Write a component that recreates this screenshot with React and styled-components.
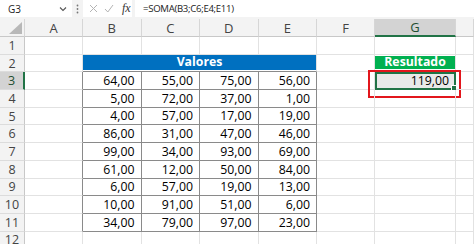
import React from "react";
import styled, { createGlobalStyle } from "styled-components";

const Global = createGlobalStyle`
  html, body { margin: 0; padding: 0; background: #fff; overflow: hidden; }
  body { font-family: "Open Sans", "Noto Sans", sans-serif; }
`;

const Page = styled.div`
  width: 474px;
  height: 244px;
  display: flex;
  flex-direction: column;
  background: #f3f3f3;
  overflow: hidden;
`;

const FormulaBar = styled.div`
  display: flex;
  align-items: stretch;
  padding-bottom: 2px;
  box-sizing: border-box;
  height: 19px;
  flex: none;
`;

const NameBox = styled.div`
  width: 72px;
  background: #fff;
  display: flex;
  align-items: center;
  justify-content: space-between;
  padding: 0 5px 0 8px;
  box-sizing: border-box;
  font-size: 10px;
  color: #222;
`;

const Dots = styled.div`
  width: 11px;
  display: flex;
  align-items: center;
  justify-content: center;
`;

const FxBox = styled.div`
  width: 49px;
  background: #fff;
  display: flex;
  align-items: center;
  gap: 6px;
  padding-left: 6px;
  box-sizing: border-box;
`;

const Fx = styled.span`
  font-family: "Liberation Serif", serif;
  font-style: italic;
  font-size: 12px;
  color: #333;
  margin-left: 2px;
`;

const FormulaInput = styled.div`
  flex: 1;
  margin-left: 3px;
  background: #fff;
  display: flex;
  align-items: center;
  padding-left: 8px;
  font-size: 9.6px;
  letter-spacing: -0.3px;
  color: #222;
`;

const Sheet = styled.div`
  flex: 1;
  display: grid;
  grid-template-columns: 25px 58px 58.5px 58.5px 58.5px 58.5px 58px 81px 1fr;
  grid-template-rows: 18px;
  grid-auto-rows: 17.7px;
  background: #fff;
`;

const Corner = styled.div`
  background: #f3f3f3;
  border-right: 1px solid #d6d6d6;
  border-bottom: 1px solid #c8c8c8;
  display: flex;
  align-items: flex-end;
  justify-content: flex-end;
  padding: 0 2px 2px 0;
`;

const ColHead = styled.div`
  background: ${(p) => (p.$sel ? "#d3d3d3" : "#f3f3f3")};
  border-right: 1px solid #d6d6d6;
  border-bottom: ${(p) => (p.$sel ? "2px solid #217346" : "1px solid #c8c8c8")};
  display: flex;
  align-items: center;
  justify-content: center;
  font-size: 13px;
  color: ${(p) => (p.$sel ? "#1f4e2f" : "#444")};
`;

const RowHead = styled.div`
  background: ${(p) => (p.$sel ? "#d3d3d3" : "#f3f3f3")};
  border-right: ${(p) => (p.$sel ? "2px solid #217346" : "1px solid #c8c8c8")};
  border-bottom: 1px solid #dcdcdc;
  display: flex;
  align-items: center;
  justify-content: center;
  font-size: 12.5px;
  color: ${(p) => (p.$sel ? "#1f4e2f" : "#444")};
  box-sizing: border-box;
`;

const Cell = styled.div`
  position: relative;
  box-sizing: border-box;
  border-right: 1px solid ${(p) => (p.$rd ? "#8a8a8a" : "#e2e2e2")};
  border-bottom: 1px solid ${(p) => (p.$bd ? "#8a8a8a" : "#e2e2e2")};
  display: flex;
  align-items: flex-end;
  justify-content: flex-end;
  padding: 0 6px 1px 0;
  font-size: 12.3px;
  color: #000;
  line-height: 15px;
`;

const Merged = styled.div`
  grid-column: ${(p) => p.$span};
  box-sizing: border-box;
  border-right: 1px solid ${(p) => (p.$rd ? "#8a8a8a" : "#e2e2e2")};
  border-bottom: 1px solid ${(p) => (p.$bd ? "#8a8a8a" : "#e2e2e2")};
  padding: ${(p) => p.$pad};
  display: flex;
  background: #fff;
`;

const Band = styled.div`
  flex: 1;
  background: ${(p) => p.$color};
  color: #fff;
  font-weight: 700;
  font-size: 12.3px;
  display: flex;
  align-items: center;
  justify-content: center;
  line-height: 1;
`;

const Selected = styled(Cell)`
  background: #e9e9e9;
  border: 2px solid #217346;
  padding: 0 5px 0 0;
`;

const Handle = styled.span`
  position: absolute;
  right: -3px;
  bottom: -3px;
  width: 4px;
  height: 4px;
  background: #217346;
  border: 1px solid #fff;
`;

const RedMark = styled.span`
  position: absolute;
  left: -9px;
  top: -4px;
  right: -7px;
  bottom: -10px;
  border: 2.5px solid #e2161c;
  pointer-events: none;
`;

const cols = ["A", "B", "C", "D", "E", "F", "G", "H"];
const data = [
  [64, 55, 75, 56],
  [5, 72, 37, 1],
  [4, 57, 17, 19],
  [86, 31, 47, 46],
  [99, 34, 93, 69],
  [61, 12, 50, 84],
  [6, 57, 19, 13],
  [10, 91, 51, 6],
  [34, 79, 97, 23],
];
const fmt = (n) => n.toFixed(2).replace(".", ",");

export default function App() {
  const rows = [];
  rows.push(
    <React.Fragment key="r1">
      <RowHead>1</RowHead>
      {cols.map((c) => (
        <Cell key={c} />
      ))}
    </React.Fragment>
  );
  rows.push(
    <React.Fragment key="r2">
      <RowHead>2</RowHead>
      <Cell />
      <Merged $span="span 4" $bd $pad="0 0 1px 0">
        <Band $color="#0070c0">Valores</Band>
      </Merged>
      <Cell />
      <Merged $span="span 1" $pad="1px 0 2px 0">
        <Band $color="#00b050">Resultado</Band>
      </Merged>
      <Cell />
    </React.Fragment>
  );
  data.forEach((r, i) => {
    const rn = i + 3;
    rows.push(
      <React.Fragment key={rn}>
        <RowHead $sel={rn === 3}>{rn}</RowHead>
        <Cell $rd />
        {r.map((v, j) => (
          <Cell key={j} $rd $bd>
            {fmt(v)}
          </Cell>
        ))}
        <Cell />
        {rn === 3 ? (
          <Selected>
            119,00
            <Handle />
            <RedMark />
          </Selected>
        ) : (
          <Cell />
        )}
        <Cell />
      </React.Fragment>
    );
  });
  rows.push(
    <React.Fragment key="r12">
      <RowHead>12</RowHead>
      {cols.map((c) => (
        <Cell key={c} />
      ))}
    </React.Fragment>
  );

  return (
    <>
      <Global />
      <Page>
        <FormulaBar>
          <NameBox>
            G3
            <svg width="8" height="6" viewBox="0 0 8 6">
              <path d="M1 1.5 L4 4.5 L7 1.5" fill="none" stroke="#555" strokeWidth="1.1" />
            </svg>
          </NameBox>
          <Dots>
            <svg width="3" height="10" viewBox="0 0 3 10">
              <circle cx="1.5" cy="1.5" r="0.9" fill="#777" />
              <circle cx="1.5" cy="5" r="0.9" fill="#777" />
              <circle cx="1.5" cy="8.5" r="0.9" fill="#777" />
            </svg>
          </Dots>
          <FxBox>
            <svg width="9" height="9" viewBox="0 0 9 9">
              <path d="M1 1 L8 8 M8 1 L1 8" stroke="#b4b4b4" strokeWidth="1" />
            </svg>
            <svg width="10" height="9" viewBox="0 0 10 9">
              <path d="M1 5 L3.8 8 L9 1" fill="none" stroke="#b4b4b4" strokeWidth="1" />
            </svg>
            <Fx>fx</Fx>
          </FxBox>
          <FormulaInput>=SOMA(B3;C6;E4;E11)</FormulaInput>
        </FormulaBar>
        <Sheet>
          <Corner>
            <svg width="13" height="12" viewBox="0 0 13 12">
              <path d="M13 0 L13 12 L0 12 Z" fill="#b8b8b8" />
            </svg>
          </Corner>
          {cols.map((c) => (
            <ColHead key={c} $sel={c === "G"}>
              {c === "H" ? "" : c}
            </ColHead>
          ))}
          {rows}
        </Sheet>
      </Page>
    </>
  );
}
